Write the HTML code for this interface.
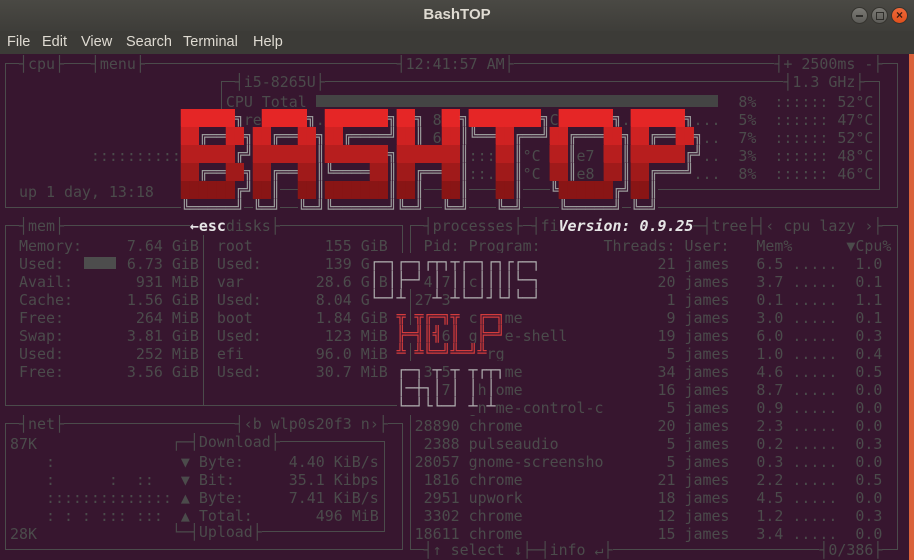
<!DOCTYPE html>
<html><head><meta charset="utf-8"><style>
*{margin:0;padding:0;box-sizing:border-box}
body{width:914px;height:560px;overflow:hidden;background:#37162f;position:relative;font-family:"Liberation Sans",sans-serif}
#tb{position:absolute;left:0;top:0;width:914px;height:31px;background:linear-gradient(#4a4944,#3e3d39);color:#dfdbd2;font-weight:bold;font-size:15px;text-align:center;line-height:30px}
#mb{position:absolute;left:0;top:31px;width:914px;height:23px;background:#3c3b37;color:#dfdbd2;font-size:14.5px;line-height:23px}
#mb span{position:absolute;top:0}
.wb{position:absolute;top:7px;width:17px;height:17px;border-radius:50%;background:linear-gradient(#7b7a75,#5d5c58);border:1px solid #35342f}
#strip{position:absolute;left:909px;top:54px;width:5px;height:506px;background:#d9623a}
#t{position:absolute;left:1px;top:55px;width:900px;height:505px;font-family:"DejaVu Sans Mono",monospace;font-size:14.95px;color:#4b4b4b}
#t p{position:absolute;white-space:pre;line-height:18px;height:18px}
#t p:not([class]){margin-top:2px}
.g{background:#37162f}
.w{color:#e6e6e6;font-weight:bold}
.bx{position:absolute;border:1px solid #4b4b4b}
.bn{position:absolute;left:180px;white-space:pre;line-height:18px;height:18px}
.bn b{display:inline-block;height:18px;vertical-align:top;background:var(--c);color:var(--c);font-weight:normal}
.bn i{font-style:normal;color:#9a9a9a;background:#37162f;display:inline-block;height:18px;vertical-align:top}
.m{color:#b0b0b0;background:#37162f}
.h{color:#d43c3c;background:#37162f}
</style></head><body>
<div id="tb">BashTOP</div>
<div class="wb" style="left:851px"><div style="position:absolute;left:4px;top:7px;width:7px;height:2px;background:#2e2d2a"></div></div>
<div class="wb" style="left:871px"><div style="position:absolute;left:4px;top:4px;width:8px;height:8px;border:1.5px solid #2e2d2a"></div></div>
<div class="wb" style="left:891px;background:linear-gradient(#f0693a,#e0501c)"><div style="position:absolute;left:0;top:0;width:15px;line-height:15px;text-align:center;font-size:12px;color:#3a1a10;font-weight:bold">×</div></div>
<div id="mb"><span style="left:7px">File</span><span style="left:42px">Edit</span><span style="left:81px">View</span><span style="left:126px">Search</span><span style="left:183px">Terminal</span><span style="left:253px">Help</span></div>
<div id="strip"></div>
<div id="t">
<div class="bx" style="left:4px;top:8px;width:893px;height:145px"></div>
<div class="bx" style="left:220px;top:26px;width:659px;height:109px"></div>
<div class="bx" style="left:4px;top:170px;width:398px;height:181px"></div>
<div class="bx" style="left:202px;top:178px;width:1px;height:172px;border-width:0 0 0 1px"></div>
<div class="bx" style="left:4px;top:368px;width:398px;height:127px"></div>
<div class="bx" style="left:175px;top:386px;width:209px;height:91px;border-left:none"></div>
<div class="bx" style="left:409px;top:170px;width:488px;height:325px"></div>
<div style="position:absolute;left:315px;top:40px;width:402px;height:12px;background:#444"></div>
<div style="position:absolute;left:83px;top:202px;width:32px;height:12px;background:#4d4d4d"></div>

<p class="g" style="top:0;left:2ch">┤cpu├</p><p class="g" style="top:0;left:10ch">┤menu├</p><p class="g" style="top:0;left:44ch">┤12:41:57 AM├</p><p class="g" style="top:0;left:86ch">┤+ 2500ms -├</p>
<p class="g" style="top:18px;left:26ch">┤i5-8265U├</p><p class="g" style="top:18px;left:87ch">┤1.3 GHz├</p>
<p style="top:36px;left:25ch">CPU Total</p><p style="top:36px;left:82ch">8%  :::::: 52°C</p>
<p style="top:54px;left:25ch">Core1 ...............  8% .... 52°C</p><p style="top:54px;left:61ch">Core5 .............  5%  :::::: 47°C</p>
<p style="top:72px;left:25ch">Core2 ...............  6% .... 47°C</p><p style="top:72px;left:61ch">Core6 .............  7%  :::::: 52°C</p>
<p style="top:90px;left:25ch">Core3 ...............  4% :::: 52°C</p><p style="top:90px;left:61ch">Core7 .............  3%  :::::: 48°C</p>
<p style="top:108px;left:25ch">Core4 ...............  9% .::. 46°C</p><p style="top:108px;left:61ch">Core8 .............  8%  :::::: 46°C</p>
<p style="top:90px;left:10ch">::::::::::</p>
<p style="top:126px;left:2ch">up 1 day, 13:18</p>

<p class="g" style="top:162px;left:2ch">┤mem├</p><p class="g w" style="top:162px;left:21ch">←esc</p><p class="g" style="top:162px;left:25ch">disks├</p>
<p class="g" style="top:162px;left:47ch">┤processes├</p><p class="g" style="top:162px;left:59ch">┤fi</p><p class="g w" style="top:162px;left:62ch;font-style:italic">Version: 0.9.25</p><p class="g" style="top:162px;left:77ch">─┤tree├┤‹ cpu lazy ›├</p>

<p style="top:180px;left:2ch">Memory:     7.64 GiB</p><p style="top:180px;left:24ch">root        155 GiB</p>
<p style="top:198px;left:2ch">Used:       6.73 GiB</p><p style="top:198px;left:24ch">Used:       139 GiB</p>
<p style="top:216px;left:2ch">Avail:       931 MiB</p><p style="top:216px;left:24ch">var        28.6 GiB</p>
<p style="top:234px;left:2ch">Cache:      1.56 GiB</p><p style="top:234px;left:24ch">Used:      8.04 GiB</p>
<p style="top:252px;left:2ch">Free:        264 MiB</p><p style="top:252px;left:24ch">boot       1.84 GiB</p>
<p style="top:270px;left:2ch">Swap:       3.81 GiB</p><p style="top:270px;left:24ch">Used:       123 MiB</p>
<p style="top:288px;left:2ch">Used:        252 MiB</p><p style="top:288px;left:24ch">efi        96.0 MiB</p>
<p style="top:306px;left:2ch">Free:       3.56 GiB</p><p style="top:306px;left:24ch">Used:      30.7 MiB</p>

<p style="top:180px;left:47ch">Pid: Program:</p><p style="top:180px;left:67ch">Threads: User:   Mem%      ▼Cpu%</p>
<p style="top:198px;left:47ch">1845 chrome</p><p style="top:198px;left:73ch">21 james   6.5 .....  1.0</p>
<p style="top:216px;left:46ch">24475 chrome</p><p style="top:216px;left:73ch">20 james   3.7 .....  0.1</p>
<p style="top:234px;left:46ch">27135 chrome</p><p style="top:234px;left:74ch">1 james   0.1 .....  1.1</p>
<p style="top:252px;left:47ch">3120 chrome</p><p style="top:252px;left:74ch">9 james   3.0 .....  0.1</p>
<p style="top:270px;left:46ch">17262 gnome-shell</p><p style="top:270px;left:73ch">19 james   6.0 .....  0.3</p>
<p style="top:288px;left:47ch">1342 Xorg</p><p style="top:288px;left:74ch">5 james   1.0 .....  0.4</p>
<p style="top:306px;left:46ch">13758 chrome</p><p style="top:306px;left:73ch">34 james   4.6 .....  0.5</p>
<p style="top:324px;left:46ch">22671 chrome</p><p style="top:324px;left:73ch">16 james   8.7 .....  0.0</p>
<p style="top:342px;left:47ch">2215 gnome-control-c</p><p style="top:342px;left:74ch">5 james   0.9 .....  0.0</p>
<p style="top:360px;left:46ch">28890 chrome</p><p style="top:360px;left:73ch">20 james   2.3 .....  0.0</p>
<p style="top:378px;left:47ch">2388 pulseaudio</p><p style="top:378px;left:74ch">5 james   0.2 .....  0.3</p>
<p style="top:396px;left:46ch">28057 gnome-screensho</p><p style="top:396px;left:74ch">5 james   0.3 .....  0.0</p>
<p style="top:414px;left:47ch">1816 chrome</p><p style="top:414px;left:73ch">21 james   2.2 .....  0.5</p>
<p style="top:432px;left:47ch">2951 upwork</p><p style="top:432px;left:73ch">18 james   4.5 .....  0.0</p>
<p style="top:450px;left:47ch">3302 chrome</p><p style="top:450px;left:73ch">12 james   1.2 .....  0.3</p>
<p style="top:468px;left:46ch">18611 chrome</p><p style="top:468px;left:73ch">15 james   3.4 .....  0.0</p>
<p class="g" style="top:486px;left:47ch">┤↑ select ↓├─┤info ↵├</p><p class="g" style="top:486px;left:91ch">┤0/386├</p>

<p class="g" style="top:360px;left:2ch">┤net├</p><p class="g" style="top:360px;left:26ch">┤‹b wlp0s20f3 n›├</p>
<p style="top:378px;left:1ch">87K</p><p class="g" style="top:378px;left:19ch">┌─┤Download├</p>
<p style="top:396px;left:20ch">▼ Byte:</p><p style="top:396px;left:32ch">4.40 KiB/s</p>
<p style="top:414px;left:20ch">▼ Bit:</p><p style="top:414px;left:32ch">35.1 Kibps</p>
<p style="top:432px;left:20ch">▲ Byte:</p><p style="top:432px;left:32ch">7.41 KiB/s</p>
<p style="top:450px;left:20ch">▲ Total:</p><p style="top:450px;left:35ch">496 MiB</p>
<p style="top:468px;left:1ch">28K</p><p class="g" style="top:468px;left:19ch">└─┤Upload├</p>
<p style="top:396px;left:5ch">:            </p>
<p style="top:414px;left:5ch">:      :  :: </p>
<p style="top:432px;left:5ch">::::::::::::::</p>
<p style="top:450px;left:5ch">: : : ::: ::: </p>

<div class="bn" style="top:54px;--c:#e52626"><b>██████</b><i>╗</i>  <b>█████</b><i>╗</i> <b>███████</b><i>╗</i><b>██</b><i>╗</i>  <b>██</b><i>╗</i><b>████████</b><i>╗</i> <b>██████</b><i>╗</i> <b>██████</b><i>╗</i></div>
<div class="bn" style="top:72px;--c:#cf2222"><b>██</b><i>╔══</i><b>██</b><i>╗</i><b>██</b><i>╔══</i><b>██</b><i>╗</i><b>██</b><i>╔════╝</i><b>██</b><i>║</i>  <b>██</b><i>║╚══</i><b>██</b><i>╔══╝</i><b>██</b><i>╔═══</i><b>██</b><i>╗</i><b>██</b><i>╔══</i><b>██</b><i>╗</i></div>
<div class="bn" style="top:90px;--c:#b71e1e"><b>██████</b><i>╔╝</i><b>███████</b><i>║</i><b>███████</b><i>╗</i><b>███████</b><i>║</i>   <b>██</b><i>║</i>   <b>██</b><i>║</i>   <b>██</b><i>║</i><b>██████</b><i>╔╝</i></div>
<div class="bn" style="top:108px;--c:#a01a1a"><b>██</b><i>╔══</i><b>██</b><i>╗</i><b>██</b><i>╔══</i><b>██</b><i>║╚════</i><b>██</b><i>║</i><b>██</b><i>╔══</i><b>██</b><i>║</i>   <b>██</b><i>║</i>   <b>██</b><i>║</i>   <b>██</b><i>║</i><b>██</b><i>╔═══╝</i></div>
<div class="bn" style="top:126px;--c:#891515"><b>██████</b><i>╔╝</i><b>██</b><i>║</i>  <b>██</b><i>║</i><b>███████</b><i>║</i><b>██</b><i>║</i>  <b>██</b><i>║</i>   <b>██</b><i>║</i>   <i>╚</i><b>██████</b><i>╔╝</i><b>██</b><i>║</i></div>
<div class="bn" style="top:144px"><i>╚═════╝</i> <i>╚═╝</i>  <i>╚═╝╚══════╝╚═╝</i>  <i>╚═╝</i>   <i>╚═╝</i>    <i>╚═════╝</i> <i>╚═╝</i></div>

<p class="m" style="top:198px;left:41ch">┌─┐┌─┐┌┬┐┬┌─┐┌┐┌┌─┐</p>
<p class="m" style="top:216px;left:41ch">│</p><p class="m" style="top:216px;left:43ch">│├─┘</p><p class="m" style="top:216px;left:48ch">│</p><p class="m" style="top:216px;left:50ch">││</p><p class="m" style="top:216px;left:53ch">││││└─┐</p>
<p class="m" style="top:234px;left:41ch">└─┘┴</p><p class="m" style="top:234px;left:48ch">┴</p><p class="m" style="top:234px;left:50ch">┴└─┘┘└┘└─┘</p>
<p class="h" style="top:252px;left:44ch">╦</p><p class="h" style="top:252px;left:46ch">╦╔═╗╦</p><p class="h" style="top:252px;left:53ch">╔═╗</p>
<p class="h" style="top:270px;left:44ch">╠═╣║╣</p><p class="h" style="top:270px;left:50ch">║</p><p class="h" style="top:270px;left:53ch">╠═╝</p>
<p class="h" style="top:288px;left:44ch">╩</p><p class="h" style="top:288px;left:46ch">╩╚═╝╩═╝╩</p>
<p class="m" style="top:306px;left:44ch">┌─┐</p><p class="m" style="top:306px;left:48ch">┬</p><p class="m" style="top:306px;left:50ch">┬</p><p class="m" style="top:306px;left:52ch">┬┌┬┐</p>
<p class="m" style="top:324px;left:44ch">│─┼┐│</p><p class="m" style="top:324px;left:50ch">│</p><p class="m" style="top:324px;left:52ch">│</p><p class="m" style="top:324px;left:54ch">│</p>
<p class="m" style="top:342px;left:44ch">└─┘└└─┘</p><p class="m" style="top:342px;left:52ch">┴</p><p class="m" style="top:342px;left:54ch">┴</p>
</div>
</body></html>
